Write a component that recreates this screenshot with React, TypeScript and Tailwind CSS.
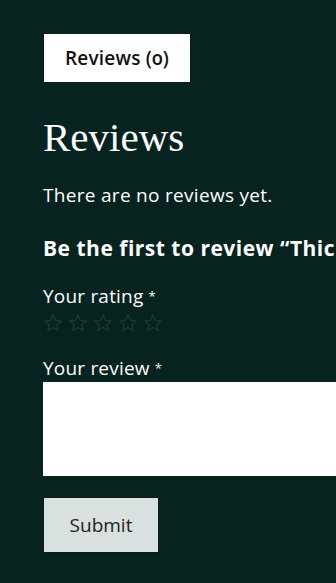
export default function App() {
  return (
    <div className="h-[583px] w-[336px] overflow-hidden bg-[#062320] font-['Open_Sans','Liberation_Sans',sans-serif] text-white">
      <div className="w-[520px] pl-[43px] pt-[33px]">
        <div className="inline-flex h-[50px] w-[148px] items-center justify-center border border-[#0a1a18] bg-white text-[19px] font-semibold tracking-[0.2px] text-[#111] oldstyle-nums">
          Reviews (0)
        </div>

        <h2 className="mt-[30px] font-['Liberation_Serif',serif] text-[41px] leading-[48px]">
          Reviews
        </h2>

        <p className="mt-[20px] text-[19px] tracking-[0.3px] leading-[28px]">There are no reviews yet.</p>

        <h3 className="mt-[24px] whitespace-nowrap text-[21px] font-bold tracking-[0.5px] leading-[30px]">
          Be the first to review “Thick Cotton Hoodie”
        </h3>

        <form className="mt-[19px]">
          <label className="block text-[19px] tracking-[0.2px] leading-[28px]">
            Your rating <span className="align-top text-[13px]">*</span>
          </label>
          <div className="mt-[3px] flex gap-[5px]">
            {[1, 2, 3, 4, 5].map((n) => (
              <svg key={n} width="20" height="20" viewBox="0 0 24 24" fill="none" stroke="#203836" strokeWidth="1.6" strokeLinejoin="round">
                <path d="M12 2.5l2.9 6.3 6.9.7-5.2 4.6 1.5 6.8L12 17.4l-6.1 3.5 1.5-6.8-5.2-4.6 6.9-.7z" />
              </svg>
            ))}
          </div>

          <label className="mt-[21px] block text-[19px] tracking-[0.2px] leading-[28px]">
            Your review <span className="align-top text-[13px]">*</span>
          </label>
          <textarea className="block h-[94px] w-[460px] resize-none bg-white outline-none" />

          <button
            type="button"
            className="mt-[21px] h-[56px] w-[116px] border border-[#0a1a18] bg-[#d9e0e0] text-[19px] text-[#222]"
          >
            Submit
          </button>
        </form>
      </div>
    </div>
  );
}
